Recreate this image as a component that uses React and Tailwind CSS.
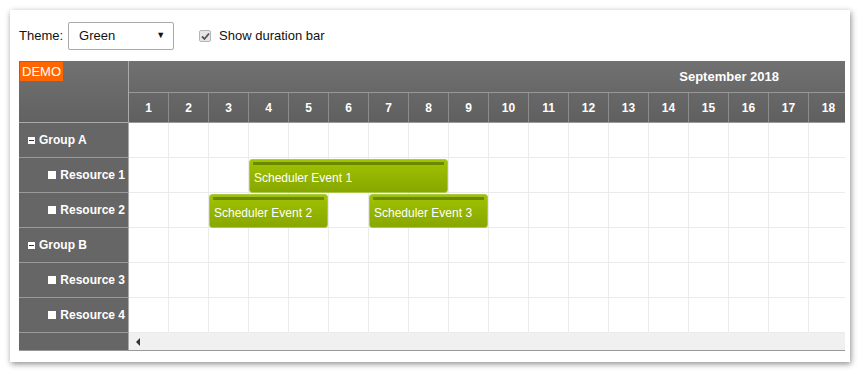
import React from "react";

const days = Array.from({ length: 18 }, (_, i) => i + 1);

const rows = [
  { name: "Group A", group: true },
  { name: "Resource 1", events: [{ text: "Scheduler Event 1", left: 120, width: 199 }] },
  {
    name: "Resource 2",
    events: [
      { text: "Scheduler Event 2", left: 80, width: 119 },
      { text: "Scheduler Event 3", left: 240, width: 119 },
    ],
  },
  { name: "Group B", group: true },
  { name: "Resource 3" },
  { name: "Resource 4" },
];

const Event = ({ text, left, width }) => (
  <div
    className="absolute top-[1px] h-[34px] rounded-[3px] border border-[#a9c94a] bg-gradient-to-b from-[#a0c300] to-[#88a700] text-white"
    style={{ left, width }}
  >
    <div className="mx-[3px] mt-[2px] h-[3px] bg-[#6a8900]" />
    <div className="pl-[4px] pt-[6px] text-[12px] leading-[14px] whitespace-nowrap">{text}</div>
  </div>
);

const App = () => (
  <div className="w-[860px] h-[372px] bg-white p-[10px] font-['Liberation_Sans',Arial,sans-serif]">
    <div className="w-[840px] h-[352px] bg-white shadow-[1px_2px_6px_rgba(0,0,0,0.45)] pl-[9px] pt-[12px]">
      {/* toolbar */}
      <div className="flex items-center h-[28px] text-[13px] text-[#111]">
        <span>Theme:</span>
        <div className="ml-[5px] flex items-center justify-between w-[106px] h-[28px] border border-[#a9a9a9] rounded-[2px] pl-[10px] pr-[8px]">
          <span>Green</span>
          <span className="text-[9px]">▼</span>
        </div>
        <div className="ml-[25px] w-[12px] h-[12px] border border-[#b5b5b5] bg-[#e6e6e6] rounded-[2px] flex items-center justify-center">
          <svg width="9" height="9" viewBox="0 0 9 9">
            <path d="M1 4.5 L3.5 7 L8 1.5" stroke="#555" strokeWidth="1.8" fill="none" />
          </svg>
        </div>
        <span className="ml-[8px]">Show duration bar</span>
      </div>

      {/* scheduler */}
      <div className="mt-[11px] w-[826px] h-[290px] flex border-b border-[#999] overflow-hidden">
        {/* left column */}
        <div className="w-[110px] shrink-0 flex flex-col bg-[#666] border-r border-[#aaa] text-white text-[12px] font-bold">
          <div className="h-[62px] shrink-0 border-b border-[#aaa] bg-gradient-to-b from-[#717171] to-[#626262] pl-[1px] pt-[1px]">
            <span className="inline-block bg-[#ff6600] px-[2px] h-[19px] leading-[19px] text-[13px] font-normal">DEMO</span>
          </div>
          {rows.map((r) => (
            <div
              key={r.name}
              className={`h-[35px] shrink-0 border-b border-[#9a9a9a] flex items-center ${r.group ? "pl-[9px]" : "justify-end pr-[3px]"}`}
            >
              {r.group ? (
                <span className="w-[7px] h-[7px] bg-white flex items-center mr-[4px]">
                  <span className="block w-[5px] h-[1px] bg-[#333] mx-auto" />
                </span>
              ) : (
                <span className="w-[8px] h-[8px] bg-white mr-[4px]" />
              )}
              <span>{r.name}</span>
            </div>
          ))}
          <div className="flex-1" />
        </div>

        {/* right grid */}
        <div className="flex-1 overflow-hidden flex flex-col">
          <div className="w-[720px] shrink-0 bg-gradient-to-b from-[#717171] to-[#5f5f5f] text-white text-[12px] font-bold">
            <div className="h-[32px] border-b border-[#999] flex items-center justify-end pr-[70px] text-[13px]">
              September 2018
            </div>
            <div className="h-[30px] flex border-b border-[#999]">
              {days.map((d) => (
                <div key={d} className="w-[40px] shrink-0 border-r border-[#8c8c8c] flex items-center justify-center">
                  {d}
                </div>
              ))}
            </div>
          </div>
          {rows.map((r) => (
            <div key={r.name} className="relative w-[720px] h-[35px] shrink-0 flex border-b border-[#ebebeb] bg-white">
              {days.map((d) => (
                <div key={d} className="w-[40px] shrink-0 border-r border-[#ebebeb]" />
              ))}
              {(r.events || []).map((e) => (
                <Event key={e.text} {...e} />
              ))}
            </div>
          ))}
          <div className="flex-1 bg-[#f0f0f0] flex items-center pl-[7px]">
            <span className="w-0 h-0 border-y-[4px] border-y-transparent border-r-[4px] border-r-[#333]" />
          </div>
        </div>
      </div>
    </div>
  </div>
);

export default App;
